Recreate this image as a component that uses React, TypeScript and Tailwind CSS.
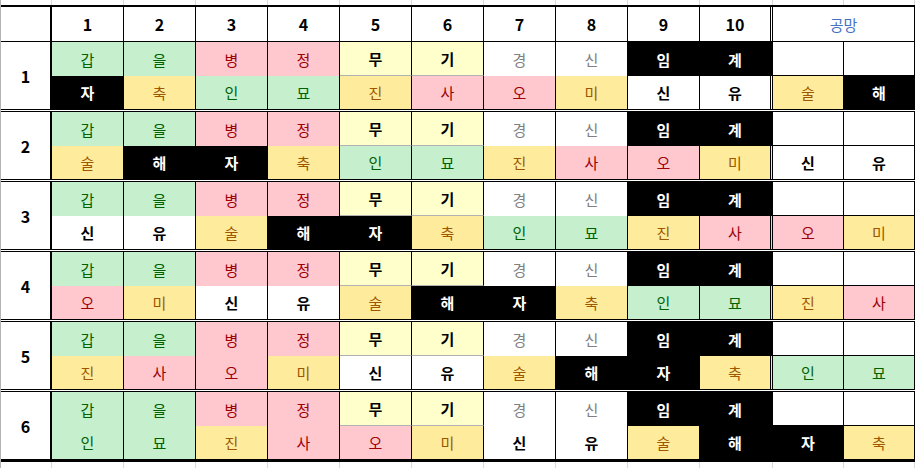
import React from "react";

type Tone = "green" | "pink" | "neutral" | "note" | "gray" | "black" | "plain" | "empty";

const toneClass: Record<Tone, string> = {
  green: "bg-[#c6efce] text-[#006100]",
  pink: "bg-[#ffc7ce] text-[#9c0006]",
  neutral: "bg-[#ffeb9c] text-[#9c5700]",
  note: "bg-[#ffffcc] text-black font-bold border-b border-b-[#b2b2b2]",
  gray: "bg-white text-[#808080]",
  black: "bg-black text-white font-bold",
  plain: "bg-white text-black font-bold",
  empty: "bg-white",
};

const stems: [string, Tone][] = [
  ["갑", "green"],
  ["을", "green"],
  ["병", "pink"],
  ["정", "pink"],
  ["무", "note"],
  ["기", "note"],
  ["경", "gray"],
  ["신", "gray"],
  ["임", "black"],
  ["계", "black"],
];

const branchTone: Record<string, Tone> = {
  자: "black",
  축: "neutral",
  인: "green",
  묘: "green",
  진: "neutral",
  사: "pink",
  오: "pink",
  미: "neutral",
  신: "plain",
  유: "plain",
  술: "neutral",
  해: "black",
};

const groups = [
  "자 축 인 묘 진 사 오 미 신 유 술 해",
  "술 해 자 축 인 묘 진 사 오 미 신 유",
  "신 유 술 해 자 축 인 묘 진 사 오 미",
  "오 미 신 유 술 해 자 축 인 묘 진 사",
  "진 사 오 미 신 유 술 해 자 축 인 묘",
  "인 묘 진 사 오 미 신 유 술 해 자 축",
].map((g) => g.split(" "));

// width + right border of each of the 12 data columns
const colClass = (i: number) =>
  i < 9
    ? "w-[72px] border-r border-r-black"
    : i === 9
    ? "w-[73px] border-r-[3px] border-double border-r-black"
    : "w-[71px] border-r border-r-black";

const faintCol = (i: number) =>
  i < 9 ? "w-[72px]" : i === 9 ? "w-[73px]" : "w-[71px]";

function FaintStrip({ h }: { h: string }) {
  return (
    <div className={`flex ${h}`}>
      <div className="w-[51px] border-r border-r-[#d9d9d9]" />
      {Array.from({ length: 12 }).map((_, i) => (
        <div key={i} className={`${faintCol(i)} border-r border-r-[#d9d9d9]`} />
      ))}
    </div>
  );
}

function Group({ n, branches, last }: { n: number; branches: string[]; last: boolean }) {
  return (
    <div
      className={`flex h-[70px] border-b-[3px] border-b-black ${
        last ? "border-solid" : "border-double"
      }`}
    >
      <div className="w-[51px] border-r-2 border-r-black flex items-center justify-center font-bold text-[16px]">
        {n}
      </div>
      <div className="flex flex-col">
        <div className="flex h-[34px]">
          {stems.map(([t, tone], i) => (
            <div
              key={i}
              className={`${colClass(i)} ${toneClass[tone]} flex items-center justify-center`}
            >
              {t}
            </div>
          ))}
          <div className={`${colClass(10)} bg-white border-b border-b-black`} />
          <div className={`${colClass(11)} bg-white border-b border-b-black`} />
        </div>
        <div className="flex h-[33px]">
          {branches.map((b, i) => (
            <div
              key={i}
              className={`${colClass(i)} ${toneClass[branchTone[b]]} flex items-center justify-center`}
            >
              {b}
            </div>
          ))}
        </div>
      </div>
    </div>
  );
}

export default function App() {
  return (
    <div className="w-[916px] h-[468px] overflow-hidden bg-white border-l border-l-[#b4b4b4] text-[15px] leading-none text-black font-['Malgun_Gothic','Noto_Sans_CJK_KR',sans-serif]">
      <FaintStrip h="h-[5px]" />
      <div className="w-[914px] border-t-2 border-t-black">
        <div className="flex h-[35px] border-b border-b-black">
          <div className="w-[51px] border-r-2 border-r-black" />
          {Array.from({ length: 10 }).map((_, i) => (
            <div key={i} className={`${colClass(i)} flex items-center justify-center font-bold text-[16px]`}>
              {i + 1}
            </div>
          ))}
          <div className="w-[142px] border-r border-r-black flex items-center justify-center text-[#4472c4]">
            공망
          </div>
        </div>
        {groups.map((g, i) => (
          <Group key={i} n={i + 1} branches={g} last={i === groups.length - 1} />
        ))}
      </div>
      <FaintStrip h="h-[8px]" />
    </div>
  );
}
